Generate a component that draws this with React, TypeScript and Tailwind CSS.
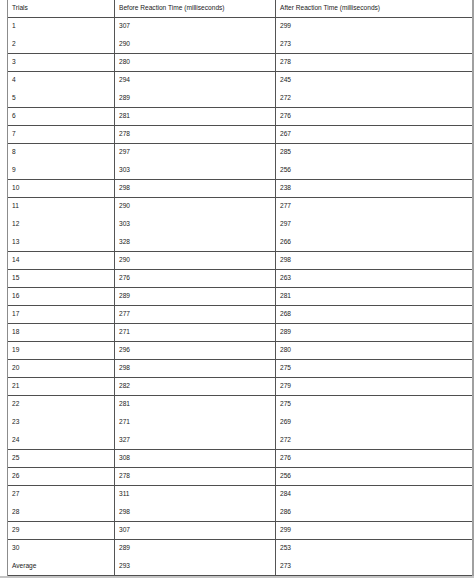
const rows: { trials: string[]; before: string[]; after: string[] }[] = [
  { trials: ['1', '2'], before: ['307', '290'], after: ['299', '273'] },
  { trials: ['3'], before: ['280'], after: ['278'] },
  { trials: ['4', '5'], before: ['294', '289'], after: ['245', '272'] },
  { trials: ['6'], before: ['281'], after: ['276'] },
  { trials: ['7'], before: ['278'], after: ['267'] },
  { trials: ['8', '9'], before: ['297', '303'], after: ['285', '256'] },
  { trials: ['10'], before: ['298'], after: ['238'] },
  { trials: ['11', '12', '13'], before: ['290', '303', '328'], after: ['277', '297', '266'] },
  { trials: ['14'], before: ['290'], after: ['298'] },
  { trials: ['15'], before: ['276'], after: ['263'] },
  { trials: ['16'], before: ['289'], after: ['281'] },
  { trials: ['17'], before: ['277'], after: ['268'] },
  { trials: ['18'], before: ['271'], after: ['289'] },
  { trials: ['19'], before: ['296'], after: ['280'] },
  { trials: ['20'], before: ['298'], after: ['275'] },
  { trials: ['21'], before: ['282'], after: ['279'] },
  { trials: ['22', '23', '24'], before: ['281', '271', '327'], after: ['275', '269', '272'] },
  { trials: ['25'], before: ['308'], after: ['276'] },
  { trials: ['26'], before: ['278'], after: ['256'] },
  { trials: ['27', '28'], before: ['311', '298'], after: ['284', '286'] },
  { trials: ['29'], before: ['307'], after: ['299'] },
  { trials: ['30', 'Average'], before: ['289', '293'], after: ['253', '273'] },
];

const heights: Record<number, string> = {
  1: 'h-[18px]',
  2: 'h-[36px]',
  3: 'h-[54px]',
};

const Cell = ({ lines, className }: { lines: string[]; className: string }) => (
  <div className={className}>
    {lines.map((l, i) => (
      <div key={i} className="h-[18px] pl-[4px] pt-[2px] leading-[12px]">
        {l}
      </div>
    ))}
  </div>
);

export default function App() {
  return (
    <div className="w-[474px] h-[578px] bg-white overflow-hidden font-['Liberation_Sans',Arial,sans-serif] text-[6.6px] text-[#222]">
      <div className="ml-[7px] w-[467px] border-l border-l-[#8c8c8c] border-r-2 border-r-[#a0a0a0]">
        <div className="flex h-[18px] border-b border-b-[#4f4f4f]">
          <Cell lines={['Trials']} className="w-[107px] border-r border-r-[#555]" />
          <Cell lines={['Before Reaction Time (milliseconds)']} className="w-[161px] border-r border-r-[#555]" />
          <Cell lines={['After Reaction Time (milliseconds)']} className="flex-1" />
        </div>
        {rows.map((r, i) => (
          <div key={i} className={`flex border-b border-b-[#4f4f4f] ${heights[r.trials.length]}`}>
            <Cell lines={r.trials} className="w-[107px] border-r border-r-[#555]" />
            <Cell lines={r.before} className="w-[161px] border-r border-r-[#555]" />
            <Cell lines={r.after} className="flex-1" />
          </div>
        ))}
      </div>
      <div className="h-[4px] bg-[#c4c4c4]" />
    </div>
  );
}
